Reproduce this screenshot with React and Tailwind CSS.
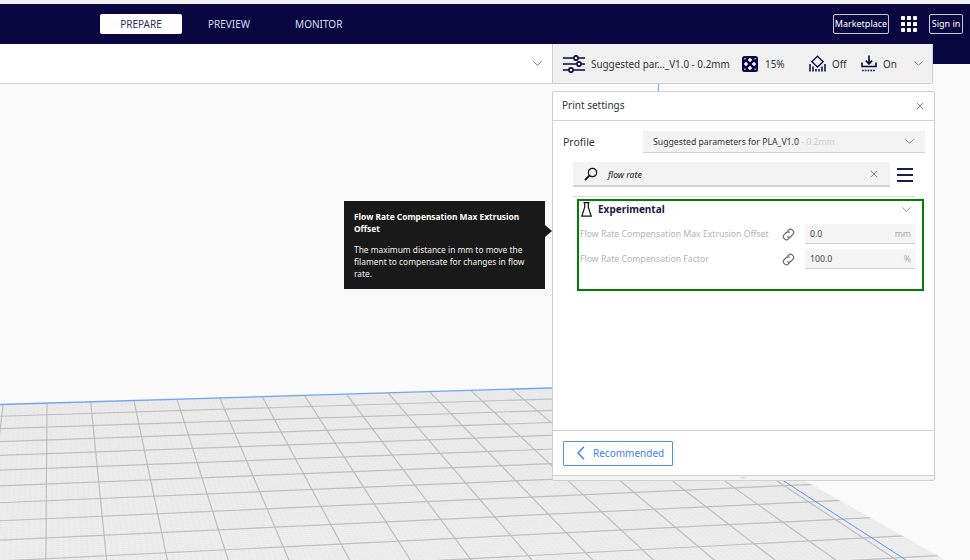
import { ChevronDown, X } from 'lucide-react';

const navy = '#08073f';

// build plate grid, fitted to the two vanishing directions of the reference
function edgeY(x) {
    return 404.5 - 0.03 * x;
}

function depthLine(j) {
    const m = -0.0074 + 0.1085 * j;
    const x0 = (50 + m * 404.5) / (1 + 0.03 * m);
    return { x1: x0, y1: edgeY(x0), x2: 50 + m * 600, y2: 600 };
}

function crossLine(i) {
    const y = 1 / (0.00248 - 0.000069 * i);
    const slope = (170 - y) / 7800;
    return { x1: -20, y1: y - 67 * slope, x2: 1000, y2: y + 953 * slope };
}

function range(from, to, step) {
    const out = [];
    for (let v = from; v <= to + 0.001; v += step) out.push(Number(v.toFixed(2)));
    return out;
}

function BuildPlate() {
    const cl = `0,${edgeY(0)} 636,${edgeY(636)} 1016,600 0,600`;
    return (
        <svg className="absolute inset-0" width="970" height="560" viewBox="0 0 970 560">
            <defs>
                <clipPath id="plate">
                    <polygon points={cl} />
                </clipPath>
            </defs>
            <polygon points={cl} fill="#efefef" />
            <g clipPath="url(#plate)">
                {range(-2, 14, 0.1).map((j) => (
                    <line key={j} {...depthLine(j)} stroke="#e5e5e5" strokeWidth="0.5" />
                ))}
                {range(0, 12, 0.1).map((i) => (
                    <line key={i} {...crossLine(i)} stroke="#e5e5e5" strokeWidth="0.5" />
                ))}
                {range(-2, 14, 1).map((j) => (
                    <line key={j} {...depthLine(j)} stroke="#bebebe" strokeWidth="1.2" />
                ))}
                {range(1, 12, 1).map((i) => (
                    <line key={i} {...crossLine(i)} stroke="#bebebe" strokeWidth="1.2" />
                ))}
            </g>
            <line x1="0" y1={edgeY(0)} x2="636" y2={edgeY(636)} stroke="#6ea4f4" strokeWidth="1.3" />
            <line x1="636" y1={edgeY(636)} x2="906" y2="560" stroke="#5c98f2" strokeWidth="1" />
            <line x1="658.5" y1="84" x2="658.5" y2="100" stroke="#8db8f5" strokeWidth="1.5" />
        </svg>
    );
}

function AppsIcon() {
    return (
        <svg width="16" height="16" viewBox="0 0 16 16" fill="#fff">
            <rect x="0" y="0" width="4" height="4" rx="1" />
            <rect x="6" y="0" width="4" height="4" rx="0.5" />
            <rect x="12" y="0" width="4" height="4" rx="1" />
            <rect x="0" y="6" width="4" height="4" rx="0.5" />
            <rect x="6" y="6" width="4" height="4" rx="0.5" />
            <rect x="12" y="6" width="4" height="4" rx="0.5" />
            <rect x="0" y="12" width="4" height="4" rx="1" />
            <rect x="6" y="12" width="4" height="4" rx="0.5" />
            <rect x="12" y="12" width="4" height="4" rx="1" />
        </svg>
    );
}

function SlidersIcon() {
    return (
        <svg width="22" height="18" viewBox="0 0 22 18" fill="none" stroke={navy} strokeWidth="1.6" className="shrink-0">
            <path d="M0 3h10.5M15.5 3H22M0 9h13.5M18.5 9H22M0 15h5.5M10.5 15H22" />
            <circle cx="13" cy="3" r="2.1" />
            <circle cx="16" cy="9" r="2.1" />
            <circle cx="8" cy="15" r="2.1" />
        </svg>
    );
}

function InfillIcon() {
    return (
        <svg width="16" height="16" viewBox="0 0 16 16" className="shrink-0">
            <rect width="16" height="16" rx="2.5" fill={navy} />
            <path
                fill="#fff"
                d="M8 1.8l2.2 2.2L8 6.2 5.8 4zM8 9.8l2.2 2.2L8 14.2 5.8 12zM4 5.8L6.2 8 4 10.2 1.8 8zM12 5.8L14.2 8 12 10.2 9.8 8z"
            />
            <path fill="#aeb0cc" d="M2 2h1.6v1.6H2zM12.4 2H14v1.6h-1.6zM2 12.4h1.6V14H2zM12.4 12.4H14V14h-1.6z" />
        </svg>
    );
}

function SupportIcon() {
    return (
        <svg width="17" height="17" viewBox="0 0 17 17" fill="none" stroke={navy} className="shrink-0">
            <path d="M8.5 1.2l5.6 5.6-5.6 5.2-5.6-5.2z" strokeWidth="1.3" />
            <path d="M1 9v7.5M4 11.5v5M7 14v2.5M10 14v2.5M13 11.5v5M16 9v7.5" strokeWidth="1.5" />
        </svg>
    );
}

function AdhesionIcon() {
    return (
        <svg width="16" height="17" viewBox="0 0 16 17" fill="none" stroke={navy} className="shrink-0">
            <path d="M8 0.5v8M4.8 5.6L8 8.8l3.2-3.2" strokeWidth="1.6" />
            <path d="M1 7.5v4h14v-4" strokeWidth="1.6" />
            <path d="M1 15.5h14" strokeWidth="1.4" strokeDasharray="1.6 1.2" />
        </svg>
    );
}

function SearchIcon() {
    return (
        <svg width="14" height="14" viewBox="0 0 14 14" fill="none" stroke="#111" className="shrink-0">
            <circle cx="8.5" cy="5.5" r="4.2" strokeWidth="1.2" />
            <path d="M5.4 8.6L1 13" strokeWidth="1.8" />
        </svg>
    );
}

function FlaskIcon() {
    return (
        <svg width="11" height="15" viewBox="0 0 11 15" fill="none" stroke="#111" strokeWidth="1.2" className="shrink-0">
            <path d="M2.5 0.6h6M3.7 0.6v4.6L0.8 14.2h9.4L7.3 5.2V0.6" />
        </svg>
    );
}

function LinkIcon() {
    return (
        <svg width="13" height="13" viewBox="0 0 13 13" fill="none" stroke="#666" strokeWidth="1.2" className="shrink-0">
            <path d="M5.4 3.4l1.5-1.5a2.3 2.3 0 0 1 3.3 0l.9.9a2.3 2.3 0 0 1 0 3.3L8.7 8.5a2.3 2.3 0 0 1-3.3 0" />
            <path d="M7.6 9.6l-1.5 1.5a2.3 2.3 0 0 1-3.3 0l-.9-.9a2.3 2.3 0 0 1 0-3.3l2.4-2.4a2.3 2.3 0 0 1 3.3 0" />
        </svg>
    );
}

function SettingRow({ label, value, unit }) {
    return (
        <div className="flex h-5 items-center">
            <span className="w-[196px] shrink-0 pt-[1px] text-[8.7px] whitespace-nowrap text-[#b4b4b4]">{label}</span>
            <span className="flex w-[24px] shrink-0 justify-center">
                <LinkIcon />
            </span>
            <div className="ml-[5px] flex h-5 w-[110px] shrink-0 items-center justify-between border-b border-[#d2d2d2] bg-[#f5f5f5] pt-[2px] pr-1 pl-[5px] text-[8.7px]">
                <span className="text-[#444]">{value}</span>
                <span className="text-[#aaa]">{unit}</span>
            </div>
        </div>
    );
}

export default function App() {
    return (
        <div
            className="relative h-[560px] w-[970px] overflow-hidden bg-[#fafafa] pt-1"
            style={{ fontFamily: '"Noto Sans", sans-serif' }}
        >
            <BuildPlate />
            <div className="absolute top-0 left-0 h-1 w-full bg-[#f0f0f0]" />
            <div className="absolute top-[44px] right-0 h-5 w-[420px] bg-[#08073f]" />

            <header className="relative flex h-10 items-center bg-[#08073f]">
                <nav className="ml-[100px] flex items-center text-[10px] text-[#dcdcf0]">
                    <span className="flex h-5 w-[82px] items-center justify-center rounded-[2px] bg-white text-[#2d2d5f]">PREPARE</span>
                    <span className="ml-[26px]">PREVIEW</span>
                    <span className="ml-[45px]">MONITOR</span>
                </nav>
                <div className="ml-auto flex items-center pr-[7px] text-[9px] text-white">
                    <span className="flex h-5 w-[56px] items-center justify-center rounded-[2px] border border-[#c9c9d6]">Marketplace</span>
                    <span className="mx-[12px]">
                        <AppsIcon />
                    </span>
                    <span className="flex h-5 w-[34px] items-center justify-center rounded-[2px] border border-[#c9c9d6]">Sign in</span>
                </div>
            </header>

            <div className="relative flex items-start">
                <div className="flex h-10 w-[552px] items-center justify-end border-b border-[#d6d6d6] bg-white pr-[7px]">
                    <ChevronDown size={15} strokeWidth={1.3} className="text-[#555]" />
                </div>

                <div className="flex w-[383px] flex-col">
                    <div className="flex h-10 w-[381px] items-center rounded-br-[2px] border border-t-0 border-[#cfcfcf] bg-[#f0f0f0] pl-[10px] text-[9.9px] text-[#333]">
                        <SlidersIcon />
                        <span className="ml-[6px] w-[151px] shrink-0 pt-[1px] whitespace-nowrap">Suggested par..._V1.0 - 0.2mm</span>
                        <InfillIcon />
                        <span className="ml-[7px] w-[27px] shrink-0 pt-[1px]">15%</span>
                        <span className="ml-[17px] shrink-0"><SupportIcon /></span>
                        <span className="ml-[6px] w-[29px] shrink-0 pt-[1px]">Off</span>
                        <AdhesionIcon />
                        <span className="ml-[6px] w-[28px] shrink-0 pt-[1px]">On</span>
                        <ChevronDown size={15} strokeWidth={1.3} className="shrink-0 text-[#777]" />
                    </div>

                    <section className="mt-[7px] flex h-[390px] flex-col rounded-[2px] border border-[#cfcfcf] bg-white">
                        <div className="flex h-[29px] shrink-0 items-center justify-between border-b border-[#d2d2d2] pr-[8px] pb-[1px] pl-[9px] text-[10px] text-[#333]">
                            Print settings
                            <X size={12} strokeWidth={1.4} className="text-[#555]" />
                        </div>

                        <div className="mt-[10px] flex items-center pl-[10px]">
                            <span className="w-[80px] pt-[1px] text-[10.5px] text-[#333]">Profile</span>
                            <div className="flex h-[22px] w-[282px] items-center justify-between border-b border-[#d2d2d2] bg-[#f3f3f3] pr-[8px] pl-[10px] text-[8.7px]">
                                <span className="pt-[2px] text-[#333]">
                                    Suggested parameters for PLA_V1.0 <span className="text-[#cccccc]">- 0.2mm</span>
                                </span>
                                <ChevronDown size={15} strokeWidth={1.3} className="text-[#666]" />
                            </div>
                        </div>

                        <div className="mt-[9px] ml-[20px] flex items-center">
                            <div className="flex h-[25px] w-[317px] items-center border-b-2 border-[#d2d2d2] bg-[#f3f3f3] pr-[10px] pl-[11px]">
                                <SearchIcon />
                                <span className="ml-[10px] pt-[3px] text-[8.5px] font-medium text-[#333] italic">flow rate</span>
                                <X size={12} strokeWidth={1.4} className="ml-auto text-[#555]" />
                            </div>
                            <div className="ml-[7px] flex w-4 flex-col gap-[4px]">
                                <span className="h-[2px] bg-[#1c1c50]" />
                                <span className="h-[2px] bg-[#1c1c50]" />
                                <span className="h-[2px] bg-[#1c1c50]" />
                            </div>
                        </div>

                        <div className="mt-[9px] ml-[20px] h-px w-[342px] bg-[#dcdcdc]" />

                        <div className="mt-[2px] ml-[24px] h-[92px] w-[347px] border-2 border-[#008000] pr-[7px] pl-[1px]">
                            <div className="flex h-4 items-center">
                                <span className="ml-[1px]"><FlaskIcon /></span>
                                <span className="ml-[6px] pt-[1px] text-[10px] font-bold text-[#1a1a40]">Experimental</span>
                                <ChevronDown size={15} strokeWidth={1.3} className="mr-[1px] ml-auto text-[#777]" />
                            </div>
                            <div className="mt-[7px] flex flex-col gap-[5px]">
                                <SettingRow label="Flow Rate Compensation Max Extrusion Offset" value="0.0" unit="mm" />
                                <SettingRow label="Flow Rate Compensation Factor" value="100.0" unit="%" />
                            </div>
                        </div>

                        <div className="mt-auto flex h-[45px] items-center border-t border-[#d2d2d2] pl-[10px]">
                            <button
                                type="button"
                                className="flex h-[25px] w-[110px] items-center rounded-[1px] border-[1.5px] border-[#4d8ff5] pl-[13px] text-[10px] text-[#3b82f0]"
                            >
                                <svg width="8" height="14" viewBox="0 0 8 14" fill="none" stroke="currentColor" strokeWidth="1.4">
                                    <path d="M7 0.8L1 7l6 6.2" />
                                </svg>
                                <span className="ml-[8px] pt-[1px]">Recommended</span>
                            </button>
                        </div>
                        <div className="flex h-[5px] items-center justify-center border-t border-[#d2d2d2] bg-[#f3f3f3]">
                            <span className="text-[5px] leading-none text-[#bbb]">•••</span>
                        </div>
                    </section>
                </div>
            </div>

            <aside className="absolute top-[201px] left-[344px] h-[88px] w-[201px] bg-[#191919] px-[10px] pt-[10px] text-[8.4px] leading-[12px] text-[#eeeeee]">
                <p className="font-bold text-white">Flow Rate Compensation Max Extrusion Offset</p>
                <p className="mt-[9px]">The maximum distance in mm to move the filament to compensate for changes in flow rate.</p>
                <span className="absolute top-[24px] -right-[7px] h-0 w-0 border-y-[6px] border-l-[7px] border-y-transparent border-l-[#191919]" />
            </aside>
        </div>
    );
}
